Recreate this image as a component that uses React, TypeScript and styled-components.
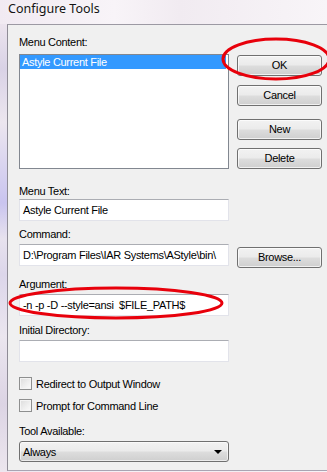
import React from "react";
import styled, { createGlobalStyle } from "styled-components";

const Global = createGlobalStyle`
  html, body { margin: 0; padding: 0; }
  body { width: 327px; height: 472px; overflow: hidden; background: #f3eef4; }
`;

const UI = `"Liberation Sans", Arial, sans-serif`;

const Window = styled.div`
  position: relative;
  width: 327px;
  height: 472px;
  display: flex;
  flex-direction: column;
  background: linear-gradient(90deg, #eee6f0 0%, #f6f1f6 40%, #f3eef3 70%, #f7f3f7 100%);
  overflow: hidden;
`;

const TitleBar = styled.div`
  height: 24px;
  flex: none;
  padding-left: 8px;
  display: flex;
  align-items: flex-start;
  background: linear-gradient(90deg, #f1eaf2 0%, #f8f4f8 35%, #f1ebf1 55%, #f8f5f8 100%);
`;

const Title = styled.span`
  font-family: "Noto Sans", "Open Sans", sans-serif;
  font-size: 12.5px;
  letter-spacing: 0;
  line-height: 16px;
  margin-top: 1px;
  color: #141414;
  text-shadow: 0 0 6px #ffffff;
`;

const Frame = styled.div`
  flex: 1;
  display: flex;
  padding-bottom: 1px;
`;

const LeftGlass = styled.div`
  width: 7px;
  flex: none;
  background: linear-gradient(
    180deg,
    #ece4ee 0%,
    #d9d2e6 10%,
    #ece6ef 22%,
    #c9c4ef 40%,
    #e7e2ee 48%,
    #dcd6ea 56%,
    #ebe6ef 70%,
    #dcd4e4 85%,
    #ece6ee 100%
  );
`;

const Client = styled.div`
  flex: 1;
  background: #f0f0f0;
  border-left: 1px solid #8f8c96;
  border-top: 1px solid #9c99a3;
  border-bottom: 1px solid #aaa4b3;
  padding-left: 11px;
  display: flex;
  flex-direction: column;
  font-family: ${UI};
  font-size: 11px;
  letter-spacing: -0.3px;
  color: #000;
`;

const Label = styled.div<{ $mt: number }>`
  height: 13px;
  line-height: 13px;
  margin-top: ${(p) => p.$mt}px;
  white-space: nowrap;
`;

const TopRow = styled.div`
  display: flex;
  gap: 8px;
`;

const LeftCol = styled.div`
  width: 210px;
  display: flex;
  flex-direction: column;
`;

const ButtonCol = styled.div`
  width: 85px;
  display: flex;
  flex-direction: column;
  padding-top: 19px;
`;

const ListBox = styled.div`
  margin-top: 5px;
  height: 115px;
  box-sizing: border-box;
  background: #fff;
  border: 1px solid #828790;
  padding: 0 2px 0 0;
`;

const ListItem = styled.div<{ $selected?: boolean }>`
  height: 14px;
  line-height: 14px;
  padding-left: 2px;
  background: ${(p) => (p.$selected ? "#3399ff" : "transparent")};
  color: ${(p) => (p.$selected ? "#fff" : "#000")};
  white-space: nowrap;
`;

const Button = styled.div<{ $mt?: number }>`
  box-sizing: border-box;
  height: 21px;
  margin-top: ${(p) => p.$mt ?? 0}px;
  border: 1px solid #707070;
  border-radius: 3px;
  background: linear-gradient(180deg, #f2f2f2 0%, #ebebeb 48%, #dddddd 52%, #cfcfcf 100%);
  box-shadow: inset 0 0 0 1px rgba(255, 255, 255, 0.7);
  display: flex;
  align-items: center;
  justify-content: center;
  line-height: 13px;
`;

const FieldRow = styled.div<{ $mt?: number }>`
  display: flex;
  gap: 8px;
  align-items: flex-start;
  margin-top: ${(p) => p.$mt ?? 0}px;
`;

const TextBox = styled.div`
  width: 210px;
  flex: none;
  height: 22px;
  box-sizing: border-box;
  background: #fff;
  border: 1px solid #e2e3ea;
  border-top-color: #abadb3;
  padding-left: 3px;
  line-height: 20px;
  white-space: pre;
  overflow: hidden;
`;

const SideButton = styled(Button)`
  width: 85px;
  margin-top: 3px;
`;

const CheckRow = styled.div<{ $mt: number }>`
  display: flex;
  align-items: center;
  gap: 4px;
  margin-top: ${(p) => p.$mt}px;
  height: 13px;
  white-space: nowrap;
`;

const CheckBox = styled.div`
  width: 13px;
  height: 13px;
  box-sizing: border-box;
  border: 1px solid #8e8f8f;
  background: linear-gradient(135deg, #dcdcdc 0%, #f0f0f0 60%, #fbfbfb 100%);
  box-shadow: inset 0 0 0 1px #f4f4f4;
  flex: none;
`;

const Select = styled.div`
  margin-top: 3px;
  width: 210px;
  height: 21px;
  box-sizing: border-box;
  border: 1px solid #707070;
  border-radius: 3px;
  background: linear-gradient(180deg, #f2f2f2 0%, #ebebeb 48%, #dddddd 52%, #cfcfcf 100%);
  box-shadow: inset 0 0 0 1px rgba(255, 255, 255, 0.6);
  display: flex;
  align-items: center;
  justify-content: space-between;
  padding: 0 6px 0 3px;
`;

const Arrow = styled.div`
  width: 0;
  height: 0;
  border-left: 4px solid transparent;
  border-right: 4px solid transparent;
  border-top: 4px solid #000;
`;

const Overlay = styled.svg`
  position: absolute;
  left: 0;
  top: 0;
  pointer-events: none;
`;

export default function App() {
  return (
    <>
      <Global />
      <Window>
        <TitleBar>
          <Title>Configure Tools</Title>
        </TitleBar>
        <Frame>
          <LeftGlass />
          <Client>
            <TopRow>
              <LeftCol>
                <Label $mt={11}>Menu Content:</Label>
                <ListBox>
                  <ListItem $selected>Astyle Current File</ListItem>
                </ListBox>
              </LeftCol>
              <ButtonCol>
                <Button $mt={11}>OK</Button>
                <Button $mt={9}>Cancel</Button>
                <Button $mt={13}>New</Button>
                <Button $mt={8}>Delete</Button>
              </ButtonCol>
            </TopRow>

            <Label $mt={16}>Menu Text:</Label>
            <FieldRow $mt={1}>
              <TextBox>Astyle Current File</TextBox>
            </FieldRow>

            <Label $mt={7}>Command:</Label>
            <FieldRow $mt={3}>
              <TextBox>{"D:\\Program Files\\IAR Systems\\AStyle\\bin\\"}</TextBox>
              <SideButton>Browse...</SideButton>
            </FieldRow>

            <Label $mt={10}>Argument:</Label>
            <FieldRow $mt={3}>
              <TextBox>{"-n -p -D --style=ansi  $FILE_PATH$"}</TextBox>
            </FieldRow>

            <Label $mt={8}>Initial Directory:</Label>
            <FieldRow $mt={3}>
              <TextBox />
            </FieldRow>

            <CheckRow $mt={15}>
              <CheckBox />
              <span>Redirect to Output Window</span>
            </CheckRow>
            <CheckRow $mt={9}>
              <CheckBox />
              <span>Prompt for Command Line</span>
            </CheckRow>

            <Label $mt={13}>Tool Available:</Label>
            <Select>
              <span>Always</span>
              <Arrow />
            </Select>
          </Client>
        </Frame>
        <Overlay width="327" height="472" viewBox="0 0 327 472">
          <ellipse cx="276" cy="59" rx="53" ry="20" fill="none" stroke="#e8000b" strokeWidth="3" />
          <ellipse cx="116" cy="303" rx="106" ry="15" fill="none" stroke="#e8000b" strokeWidth="3" />
        </Overlay>
      </Window>
    </>
  );
}
